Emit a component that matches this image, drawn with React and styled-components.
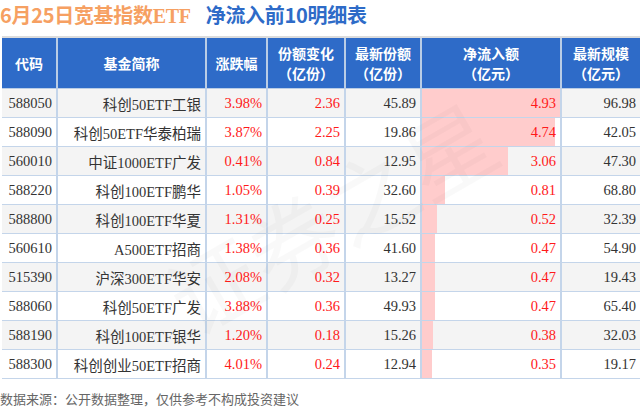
import styled, { createGlobalStyle } from "styled-components";

const GlobalStyle = createGlobalStyle`
  html, body {
    margin: 0;
    padding: 0;
    background: #ffffff;
  }
`;

const rows = [
  ["588050", "科创50ETF工银", "3.98%", "2.36", "45.89", 4.93, "96.98"],
  ["588090", "科创50ETF华泰柏瑞", "3.87%", "2.25", "19.86", 4.74, "42.05"],
  ["560010", "中证1000ETF广发", "0.41%", "0.84", "12.95", 3.06, "47.30"],
  ["588220", "科创100ETF鹏华", "1.05%", "0.39", "32.60", 0.81, "68.80"],
  ["588800", "科创100ETF华夏", "1.31%", "0.25", "15.52", 0.52, "32.39"],
  ["560610", "A500ETF招商", "1.38%", "0.36", "41.60", 0.47, "54.90"],
  ["515390", "沪深300ETF华安", "2.08%", "0.32", "13.27", 0.47, "19.43"],
  ["588060", "科创50ETF广发", "3.88%", "0.36", "49.93", 0.47, "65.40"],
  ["588190", "科创100ETF银华", "1.20%", "0.18", "15.26", 0.38, "32.03"],
  ["588300", "科创创业50ETF招商", "4.01%", "0.24", "12.94", 0.35, "19.17"],
];

const maxFlow = 4.93;
const columns = "56px 149px 61px 78px 76px 140px 78px";

const Page = styled.div`
  position: relative;
  width: 640px;
  height: 410px;
  overflow: hidden;
  font-family: "Liberation Serif", "Noto Sans CJK SC", serif;
`;

const Title = styled.h1`
  margin: 0;
  height: 36px;
  display: flex;
  align-items: center;
  gap: 15px;
  padding: 0 0 7px 0;
  box-sizing: border-box;
  font-size: 20px;
  font-weight: bold;
  font-family: "Noto Sans CJK SC", sans-serif;
  letter-spacing: -0.3px;
`;

const TitlePart = styled.span`
  color: ${(p) => p.$color};
  white-space: nowrap;
`;

const Latin = styled.span`
  font-family: "Liberation Serif", serif;
`;

const Table = styled.div`
  margin-left: 2px;
  border-top: 2px solid #dcdcdc;
`;

const HeadRow = styled.div`
  display: grid;
  grid-template-columns: ${columns};
  height: 51px;
  background: #2e6bc8;
`;

const HeadCell = styled.div`
  display: flex;
  flex-direction: column;
  align-items: center;
  justify-content: center;
  color: #ffffff;
  font-family: "Noto Sans CJK SC", sans-serif;
  font-size: 14px;
  font-weight: 600;
  line-height: 20px;
  border-right: 2px solid #b9cde6;
  border-bottom: 1px solid #b9cde6;
  &:last-child {
    border-right: none;
  }
`;

const Row = styled.div`
  display: grid;
  grid-template-columns: ${columns};
  height: 29px;
  background: ${(p) => (p.$odd ? "#f4f4f4" : "#ffffff")};
`;

const Cell = styled.div`
  position: relative;
  display: flex;
  align-items: center;
  justify-content: flex-end;
  padding-right: 4px;
  color: ${(p) => (p.$red ? "#ff1a1a" : "#333333")};
  font-size: 14.5px;
  white-space: nowrap;
  border-right: 2px solid #c4d5ea;
  border-bottom: 1px solid #c4d5ea;
  &:last-child {
    border-right: none;
  }
`;

const Bar = styled.div`
  position: absolute;
  left: 0;
  top: 0;
  bottom: 0;
  background: #ffcccc;
`;

const Value = styled.span`
  position: relative;
`;

const Footer = styled.div`
  padding: 10px 0 0 0;
  color: #666666;
  font-family: "Noto Sans CJK SC", sans-serif;
  font-size: 13px;
`;

const Watermark = styled.div`
  position: absolute;
  left: 150px;
  top: 170px;
  transform: rotate(-30deg);
  font-family: "Noto Sans CJK SC", sans-serif;
  font-size: 90px;
  line-height: 1;
  color: rgba(0, 0, 0, 0.022);
  pointer-events: none;
  white-space: nowrap;
`;

export default function App() {
  return (
    <Page>
      <GlobalStyle />
      <Title>
        <TitlePart $color="#f6a062">
          6月25日宽基指数<Latin>ETF</Latin>
        </TitlePart>
        <TitlePart $color="#2e6bc8">净流入前10明细表</TitlePart>
      </Title>
      <Table>
        <HeadRow>
          <HeadCell>代码</HeadCell>
          <HeadCell>基金简称</HeadCell>
          <HeadCell>涨跌幅</HeadCell>
          <HeadCell>
            <span>份额变化</span>
            <span>（亿份）</span>
          </HeadCell>
          <HeadCell>
            <span>最新份额</span>
            <span>（亿份）</span>
          </HeadCell>
          <HeadCell>
            <span>净流入额</span>
            <span>（亿元）</span>
          </HeadCell>
          <HeadCell>
            <span>最新规模</span>
            <span>（亿元）</span>
          </HeadCell>
        </HeadRow>
        {rows.map((r, i) => (
          <Row key={r[0]} $odd={i % 2 === 0}>
            <Cell>{r[0]}</Cell>
            <Cell>{r[1]}</Cell>
            <Cell $red>{r[2]}</Cell>
            <Cell $red>{r[3]}</Cell>
            <Cell>{r[4]}</Cell>
            <Cell $red>
              <Bar style={{ width: `${(r[5] / maxFlow) * 100}%` }} />
              <Value>{r[5].toFixed(2)}</Value>
            </Cell>
            <Cell>{r[6]}</Cell>
          </Row>
        ))}
      </Table>
      <Footer>数据来源：公开数据整理，仅供参考不构成投资建议</Footer>
      <Watermark>证券之星</Watermark>
    </Page>
  );
}
